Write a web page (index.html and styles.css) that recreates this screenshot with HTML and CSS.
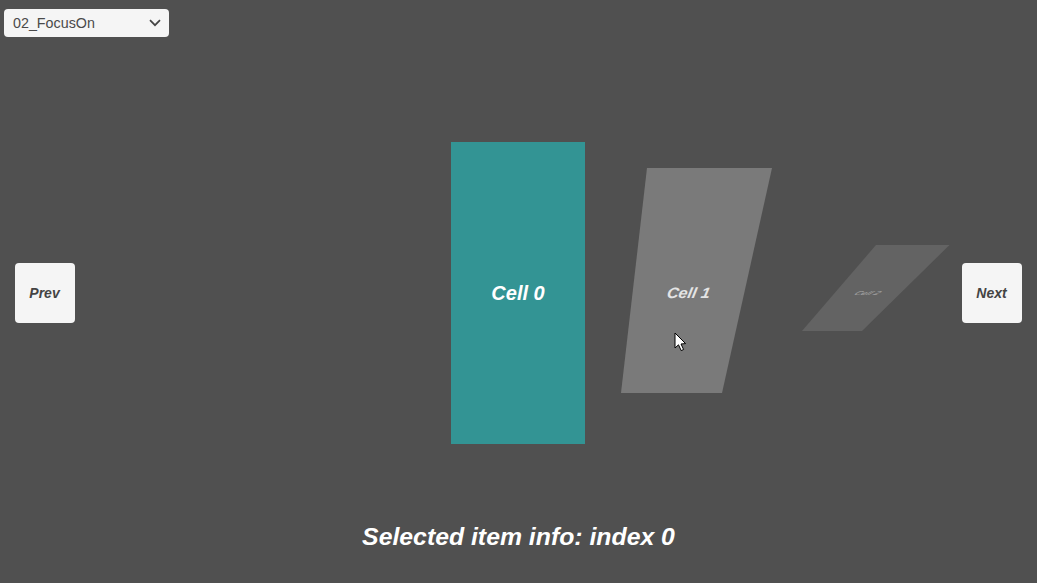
FILE: index.html
```html
<!DOCTYPE html>
<html lang="en">
<head>
    <meta charset="UTF-8">
    <meta name="viewport" content="width=device-width, initial-scale=1.0">
    <title>02_FocusOn</title>
    <link rel="stylesheet" href="styles.css">
</head>
<body>

    <div class="page">
        <!-- Scene dropdown -->
        <div class="top-bar">
            <div class="dropdown">
                <span>02_FocusOn</span>
                <svg class="dropdown-arrow" width="12" height="8" viewBox="0 0 12 8">
                    <path d="M1 1.2 L6 6.2 L11 1.2" fill="none" stroke="#444" stroke-width="1.7"/>
                </svg>
            </div>
        </div>

        <div class="stage">
            <button class="nav-button">Prev</button>

            <!-- Cells on the carousel canvas -->
            <div class="carousel">
                <div class="cell cell0"><span>Cell 0</span></div>
                <div class="cell cell1"><span>Cell 1</span></div>
                <div class="cell cell2"><span>Cell 2</span></div>
                <svg class="cursor" width="14" height="20" viewBox="0 0 14 20">
                    <path d="M1 1 L1 16 L4.5 12.8 L7.2 18.6 L9.6 17.5 L7 12 L11.6 11.6 Z" fill="#fff" stroke="#000" stroke-width="1"/>
                </svg>
            </div>

            <button class="nav-button">Next</button>
        </div>

        <div class="info">Selected item info: index 0</div>
    </div>

</body>
</html>
```

FILE: styles.css
```css
body {
    margin: 0;
    background-color: #505050;
    font-family: "Liberation Sans", Arial, sans-serif;
    overflow: hidden;
}

.page {
    display: flex;
    flex-direction: column;
    height: 583px;
    padding-bottom: 31px;
    box-sizing: border-box;
}

.top-bar {
    display: flex;
    padding: 9px 0 0 4px;
}

.dropdown {
    display: flex;
    justify-content: space-between;
    align-items: center;
    width: 165px;
    height: 28px;
    padding: 0 8px 0 9px;
    box-sizing: border-box;
    background-color: #f5f5f5;
    border-radius: 4px;
    font-size: 14.3px;
    color: #4a4a4a;
}

.stage {
    flex: 1;
    display: flex;
    align-items: center;
    padding: 27px 15.5px 0 14.5px;
}

.nav-button {
    flex: none;
    width: 60px;
    height: 60px;
    border: none;
    padding: 0;
    background-color: #f5f5f5;
    border-radius: 4px;
    font-family: inherit;
    font-size: 14px;
    font-weight: bold;
    font-style: italic;
    color: #444;
}

.carousel {
    position: relative;
    flex: 1;
    align-self: stretch;
}

.cell {
    position: absolute;
    display: flex;
    justify-content: center;
    align-items: center;
    box-sizing: border-box;
    font-size: 20px;
    font-weight: bold;
    font-style: italic;
}

.cell span {
    display: block;
    white-space: nowrap;
}

.cell0 {
    left: 376.5px;
    top: 78px;
    width: 134px;
    height: 302px;
    background-color: #339494;
    color: #fff;
}

.cell1 {
    left: 546.5px;
    top: 104px;
    width: 151px;
    height: 225px;
    padding-right: 16px;
    padding-top: 25px;
    background-color: #7a7a7a;
    clip-path: polygon(26px 0, 151px 0, 101px 225px, 0 225px);
    color: #e4e4e4;
}

.cell1 span {
    transform: scale(0.81, 0.745) skewX(-10deg);
}

.cell2 {
    left: 727.5px;
    top: 181px;
    width: 148px;
    height: 86px;
    padding-right: 16px;
    padding-top: 10px;
    background-color: #636363;
    clip-path: polygon(74px 0, 147.5px 0, 60px 86px, 0 86px);
    color: #989898;
}

.cell2 span {
    transform: scale(0.46, 0.285) skewX(-40deg);
}

.cursor {
    position: absolute;
    left: 599.5px;
    top: 268px;
}

.info {
    height: 30px;
    line-height: 30px;
    text-align: center;
    font-size: 24.8px;
    font-weight: bold;
    font-style: italic;
    color: #fff;
}
```
